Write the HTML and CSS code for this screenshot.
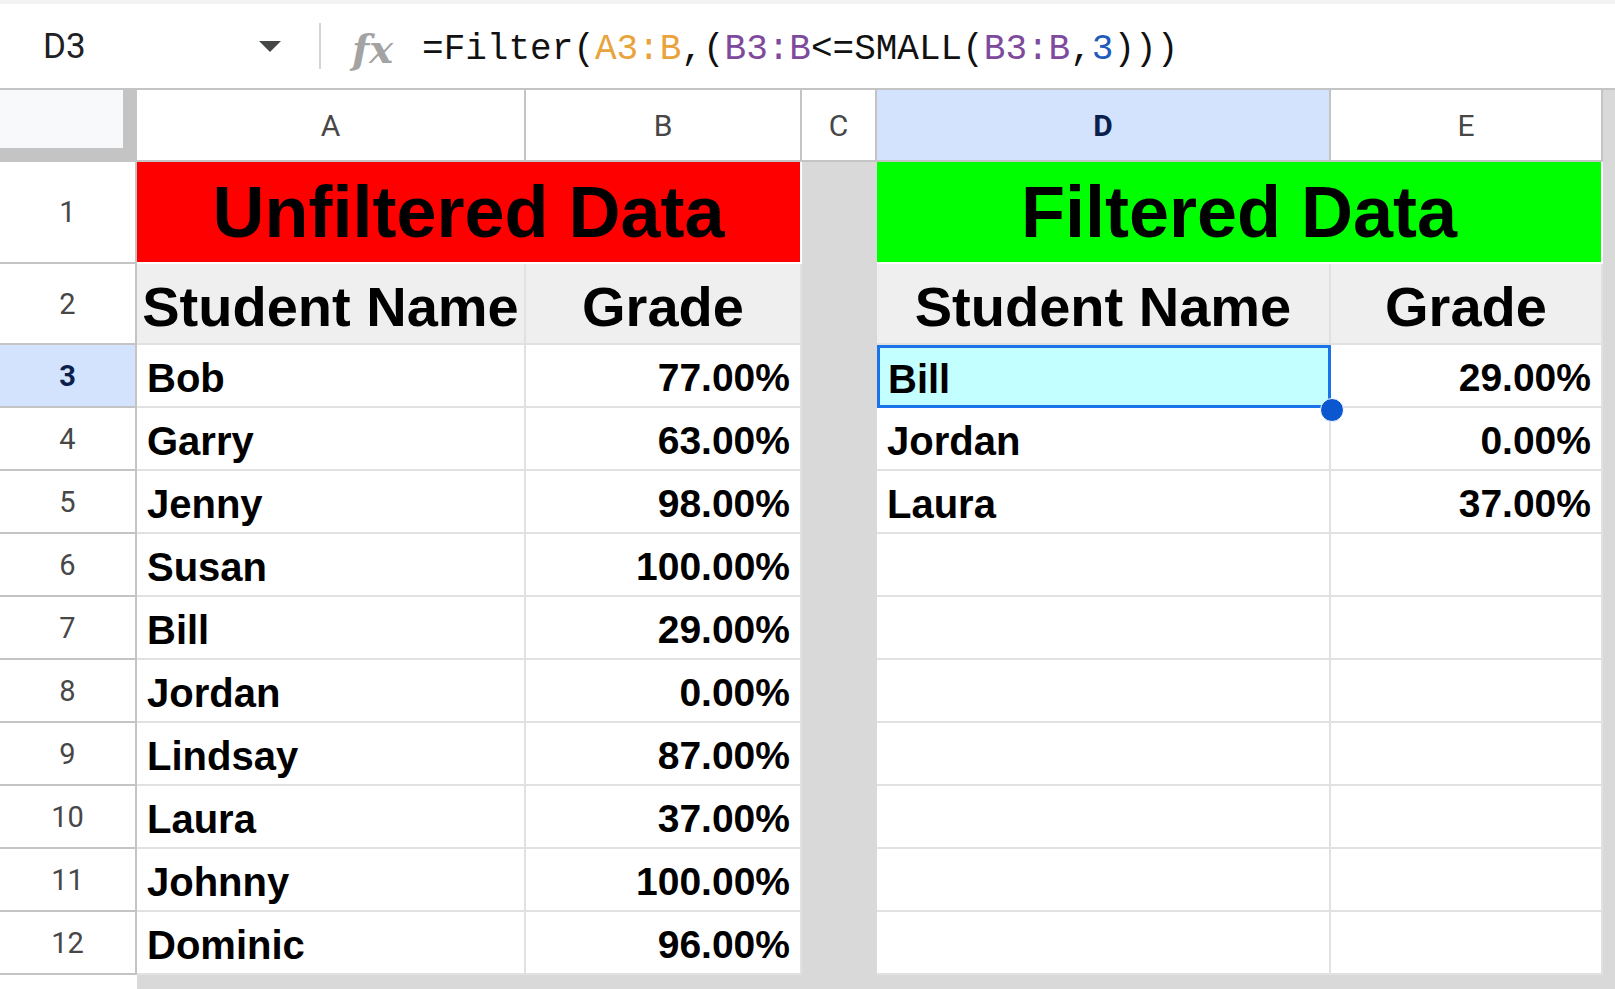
FILE: index.html
```html
<!DOCTYPE html>
<html lang="en">
<head>
    <meta charset="UTF-8">
    <meta name="viewport" content="width=device-width, initial-scale=1.0">
    <title>Filter - Student Grades</title>
    <link rel="stylesheet" href="styles.css">
</head>
<body>
    <!-- Name box + formula bar -->
    <div class="formula-bar">
        <div class="name-box">
            <span class="cell-ref">D3</span>
            <span class="caret"></span>
        </div>
        <div class="divider"></div>
        <span class="fx">fx</span>
        <div class="formula">=Filter(<span class="ref-a">A3:B</span>,(<span class="ref-b">B3:B</span>&lt;=SMALL(<span class="ref-b">B3:B</span>,<span class="num">3</span>)))</div>
    </div>

    <!-- Grid -->
    <div class="sheet-wrap">
        <div class="sheet">
            <!-- column headers -->
            <div class="corner"></div>
            <div class="ch">A</div>
            <div class="ch">B</div>
            <div class="ch">C</div>
            <div class="ch active">D</div>
            <div class="ch">E</div>

            <!-- row 1 -->
            <div class="rh">1</div>
            <div class="c title red">Unfiltered Data</div>
            <div class="c gap"></div>
            <div class="c title green">Filtered Data</div>

            <!-- row 2 -->
            <div class="rh">2</div>
            <div class="c head">Student Name</div>
            <div class="c head">Grade</div>
            <div class="c gap"></div>
            <div class="c head">Student Name</div>
            <div class="c head">Grade</div>

            <!-- row 3 -->
            <div class="rh active">3</div>
            <div class="c name">Bob</div>
            <div class="c grade">77.00%</div>
            <div class="c gap"></div>
            <div class="c name selected">Bill</div>
            <div class="c grade">29.00%</div>

            <!-- row 4 -->
            <div class="rh">4</div>
            <div class="c name">Garry</div>
            <div class="c grade">63.00%</div>
            <div class="c gap"></div>
            <div class="c name">Jordan</div>
            <div class="c grade">0.00%</div>

            <!-- row 5 -->
            <div class="rh">5</div>
            <div class="c name">Jenny</div>
            <div class="c grade">98.00%</div>
            <div class="c gap"></div>
            <div class="c name">Laura</div>
            <div class="c grade">37.00%</div>

            <!-- row 6 -->
            <div class="rh">6</div>
            <div class="c name">Susan</div>
            <div class="c grade">100.00%</div>
            <div class="c gap"></div>
            <div class="c"></div>
            <div class="c"></div>

            <!-- row 7 -->
            <div class="rh">7</div>
            <div class="c name">Bill</div>
            <div class="c grade">29.00%</div>
            <div class="c gap"></div>
            <div class="c"></div>
            <div class="c"></div>

            <!-- row 8 -->
            <div class="rh">8</div>
            <div class="c name">Jordan</div>
            <div class="c grade">0.00%</div>
            <div class="c gap"></div>
            <div class="c"></div>
            <div class="c"></div>

            <!-- row 9 -->
            <div class="rh">9</div>
            <div class="c name">Lindsay</div>
            <div class="c grade">87.00%</div>
            <div class="c gap"></div>
            <div class="c"></div>
            <div class="c"></div>

            <!-- row 10 -->
            <div class="rh">10</div>
            <div class="c name">Laura</div>
            <div class="c grade">37.00%</div>
            <div class="c gap"></div>
            <div class="c"></div>
            <div class="c"></div>

            <!-- row 11 -->
            <div class="rh">11</div>
            <div class="c name">Johnny</div>
            <div class="c grade">100.00%</div>
            <div class="c gap"></div>
            <div class="c"></div>
            <div class="c"></div>

            <!-- row 12 -->
            <div class="rh">12</div>
            <div class="c name">Dominic</div>
            <div class="c grade">96.00%</div>
            <div class="c gap"></div>
            <div class="c"></div>
            <div class="c"></div>
        </div>
    </div>
</body>
</html>
```

FILE: styles.css
```css
body {
    margin: 0;
    padding: 0;
    background: #fff;
    font-family: Roboto, "Liberation Sans", Arial, sans-serif;
    overflow: hidden;
}

/* ---------- formula bar ---------- */
.formula-bar {
    box-sizing: border-box;
    height: 90px;
    border-top: 4px solid #f3f3f3;
    border-bottom: 2px solid #c4c4c4;
    display: flex;
    align-items: center;
}

.name-box {
    box-sizing: border-box;
    width: 300px;
    padding: 0 19px 0 43px;
    display: flex;
    align-items: center;
}

.cell-ref {
    font-size: 35px;
    color: #202124;
}

.caret {
    margin-left: auto;
    width: 0;
    height: 0;
    border-left: 11px solid transparent;
    border-right: 11px solid transparent;
    border-top: 11px solid #444746;
}

.divider {
    margin-left: 19px;
    width: 2px;
    height: 46px;
    background: #d5d5d5;
}

.fx {
    margin-left: 31px;
    padding-top: 4px;
    font-family: "DejaVu Serif", "Liberation Serif", serif;
    font-style: italic;
    font-weight: bold;
    font-size: 40px;
    color: #a3a3a3;
}

.formula {
    margin-left: 29px;
    padding-top: 6px;
    font-family: "Liberation Mono", "DejaVu Sans Mono", monospace;
    font-size: 36px;
    color: #111;
}

.ref-a { color: #e8a33c; }
.ref-b { color: #7d4a9e; }
.num { color: #1e5bbd; }

/* ---------- sheet ---------- */
.sheet-wrap {
    height: 899px;
    background: linear-gradient(to right, #fff 137px, #d9d9d9 137px);
}

.sheet {
    display: grid;
    grid-template-columns: 137px 389px 276px 75px 454px 272px;
    grid-template-rows: 72px 102px 81px repeat(10, 63px);
}

.sheet > div {
    box-sizing: border-box;
    display: flex;
    align-items: center;
}

.corner {
    background: #f8f9fa;
    border-right: 14px solid #c4c4c4;
    border-bottom: 14px solid #c4c4c4;
}

.ch {
    background: #fff;
    border-right: 2px solid #c4c4c4;
    border-bottom: 2px solid #c4c4c4;
    justify-content: center;
    font-size: 30px;
    color: #474747;
}

.rh {
    background: #fff;
    border-right: 2px solid #c4c4c4;
    border-bottom: 2px solid #c4c4c4;
    justify-content: center;
    font-size: 29px;
    color: #474747;
}

.ch.active,
.rh.active {
    background: #d3e3fd;
    color: #0b1f4d;
    font-weight: bold;
}

.c {
    background: #fff;
    border-right: 2px solid #e1e1e1;
    border-bottom: 2px solid #e1e1e1;
    font-family: "Liberation Sans", Arial, sans-serif;
    font-weight: bold;
    color: #000;
    white-space: nowrap;
}

.c.gap {
    background: #d9d9d9;
    border-color: #d9d9d9;
}

.c.title {
    grid-column: span 2;
    justify-content: center;
    font-size: 72px;
    border-color: #fff;
}

.c.red { background: #ff0000; }
.c.green { background: #00ff00; }

.c.head {
    background: #efefef;
    justify-content: center;
    font-size: 56px;
    padding-top: 6px;
}

.c.name {
    font-size: 40px;
    padding: 5px 0 0 10px;
}

.c.grade {
    font-size: 39px;
    justify-content: flex-end;
    padding: 5px 10px 0 0;
}

/* active cell */
.c.selected {
    position: relative;
    background: #c4ffff;
    border: 3px solid #1a73e8;
    padding-left: 8px;
}

.c.selected::after {
    content: '';
    position: absolute;
    right: -16px;
    bottom: -17px;
    width: 22px;
    height: 22px;
    border-radius: 50%;
    background: #0b57d0;
    border: 1px solid #fff;
    z-index: 2;
}
```
